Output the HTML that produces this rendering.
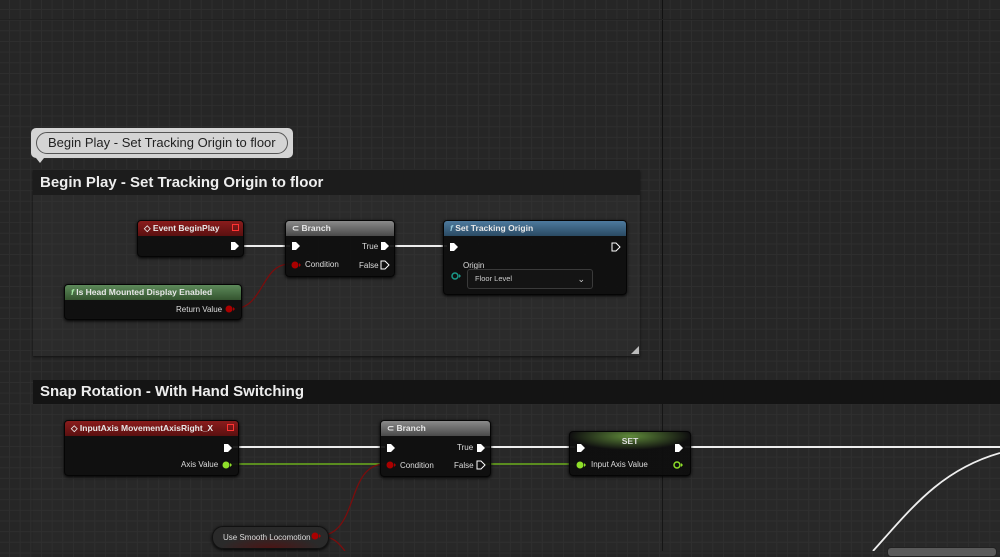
<!DOCTYPE html>
<html><head><style>
*{margin:0;padding:0;box-sizing:border-box}
body{width:1000px;height:551px;overflow:hidden;position:relative;font-family:"Liberation Sans",sans-serif;
background-color:#262626;
background-image:linear-gradient(#2e2e2e 1px,transparent 1px),linear-gradient(90deg,#2e2e2e 1px,transparent 1px);
background-size:10.67px 10.67px;background-position:9px 9px}
.abs{position:absolute}
.node{position:absolute;background:rgba(14,14,14,.92);border:1px solid #050505;border-radius:4px;box-shadow:0 1px 3px #000;color:#ddd;font-size:8.5px}
.hd{height:15px;border-radius:3px 3px 0 0;padding-left:6px;line-height:15px;font-size:8.5px;font-weight:bold;color:#e8e8e8}
.lbl{position:absolute;font-size:8px;color:#ddd}
</style></head><body>
<div class="abs" style="left:662px;top:0;width:1px;height:551px;background:#111"></div>
<div class="abs" style="left:0;top:19px;width:1000px;height:1px;background:#212121"></div>

<!-- comment bubble -->
<div class="abs" style="left:31px;top:128px;width:262px;height:30px;background:#d4d4d4;border-radius:5px"></div>
<div class="abs" style="left:36px;top:132px;width:252px;height:22px;border:1px solid #555;border-radius:11px;font-size:13px;color:#222;line-height:20px;padding-left:11px">Begin Play - Set Tracking Origin to floor</div>
<div class="abs" style="left:36px;top:158px;width:0;height:0;border-left:4px solid transparent;border-right:4px solid transparent;border-top:5px solid #d4d4d4"></div>

<!-- comment 1 -->
<div class="abs" style="left:33px;top:170px;width:607px;height:186px;background:rgba(60,60,60,.25);box-shadow:0 1px 2px #111"></div>
<div class="abs" style="left:33px;top:170px;width:607px;height:25px;background:#1c1c1c;color:#eee;font-weight:bold;font-size:15px;line-height:25px;padding-left:7px">Begin Play - Set Tracking Origin to floor</div>
<svg class="abs" style="left:630px;top:345px" width="10" height="10"><path d="M9 1L1 9H9Z" fill="#bbb"/></svg>

<!-- comment 2 -->
<div class="abs" style="left:33px;top:380px;width:967px;height:24px;background:#141414;color:#eee;font-weight:bold;font-size:15px;line-height:24px;padding-left:7px">Snap Rotation - With Hand Switching</div>
<div class="abs" style="left:33px;top:404px;width:967px;height:147px;background:rgba(60,60,60,.12)"></div>

<!-- wires -->
<svg class="abs" style="left:0;top:0" width="1000" height="551">
<g fill="none" stroke-width="2">
<path d="M243 246H290" stroke="#eee"/>
<path d="M390 246H447" stroke="#eee"/>
<path d="M232 309C265 309 260 264 290 264" stroke="#7a0d0d" stroke-width="1.3"/>
<path d="M233 447H385" stroke="#eee"/>
<path d="M226 464H385" stroke="#6aad1c" stroke-width="1.5"/>
<path d="M318 536C360 536 345 464 385 464" stroke="#7a0d0d" stroke-width="1.3"/>
<path d="M318 536C335 536 340 545 345 551" stroke="#7a0d0d" stroke-width="1.3"/>
<path d="M484 447H575" stroke="#eee"/>
<path d="M484 464H575" stroke="#6aad1c" stroke-width="1.5"/>
<path d="M685 447H1000" stroke="#eee"/>
<path d="M1000 453C940 470 910 510 873 551" stroke="#eee" stroke-width="1.8"/>
</g></svg>

<!-- Event BeginPlay -->
<div class="node" style="left:137px;top:220px;width:107px;height:37px">
<div class="hd" style="background:linear-gradient(#8a1c1c,#5a1010)">◇ Event BeginPlay</div>
<div class="abs" style="right:4px;top:3px;width:7px;height:7px;border:1.5px solid #f33"></div>
<svg class="abs" style="left:92px;top:20px" width="10" height="10"><path d="M1 1H5L9 5L5 9H1Z" fill="#fff"/></svg>
</div>

<!-- Branch 1 -->
<div class="node" style="left:285px;top:220px;width:110px;height:57px">
<div class="hd" style="background:linear-gradient(#8a8a8a,#4a4a4a)">⊂ Branch</div>
<svg class="abs" style="left:5px;top:20px" width="10" height="10"><path d="M1 1H5L9 5L5 9H1Z" fill="#fff"/></svg>
<span class="lbl" style="left:76px;top:21px">True</span>
<svg class="abs" style="left:94px;top:20px" width="10" height="10"><path d="M1 1H5L9 5L5 9H1Z" fill="#fff"/></svg>
<svg class="abs" style="left:5px;top:39px" width="12" height="10"><circle cx="4" cy="5" r="3.5" fill="#a00"/><path d="M8 3L10 5L8 7" fill="#a00"/></svg>
<span class="lbl" style="left:19px;top:39px">Condition</span>
<span class="lbl" style="left:73px;top:40px">False</span>
<svg class="abs" style="left:94px;top:39px" width="10" height="10"><path d="M1 1H5L9 5L5 9H1Z" fill="none" stroke="#fff"/></svg>
</div>

<!-- Set Tracking Origin -->
<div class="node" style="left:443px;top:220px;width:184px;height:75px">
<div class="hd" style="background:linear-gradient(#4d7a9e,#2a4a63)"><i style="color:#9cd">f</i> Set Tracking Origin</div>
<svg class="abs" style="left:5px;top:21px" width="10" height="10"><path d="M1 1H5L9 5L5 9H1Z" fill="#fff"/></svg>
<svg class="abs" style="left:167px;top:21px" width="10" height="10"><path d="M1 1H5L9 5L5 9H1Z" fill="none" stroke="#fff"/></svg>
<span class="lbl" style="left:19px;top:40px">Origin</span>
<svg class="abs" style="left:7px;top:50px" width="11" height="10"><circle cx="4" cy="5" r="3" fill="none" stroke="#1a9a8a" stroke-width="1.5"/><path d="M8 3L10 5L8 7" fill="#1a9a8a"/></svg>
<div class="abs" style="left:23px;top:48px;width:126px;height:20px;border:1px solid #3a3a3a;border-radius:3px;background:#141414;font-size:7.5px;color:#ccc;line-height:18px;padding-left:7px">Floor Level<span style="position:absolute;right:7px;top:0;font-size:9px">⌄</span></div>
</div>

<!-- Is HMD -->
<div class="node" style="left:64px;top:284px;width:178px;height:36px">
<div class="hd" style="background:linear-gradient(#5d8a5a,#34542f)"><i style="color:#aea">f</i> Is Head Mounted Display Enabled</div>
<span class="lbl" style="left:111px;top:20px">Return Value</span>
<svg class="abs" style="left:159px;top:19px" width="12" height="10"><circle cx="5" cy="5" r="3.5" fill="#a00"/><path d="M9 3L11 5L9 7" fill="#a00"/></svg>
</div>

<!-- InputAxis -->
<div class="node" style="left:64px;top:420px;width:175px;height:56px">
<div class="hd" style="background:linear-gradient(#8a1c1c,#5a1010)">◇ InputAxis MovementAxisRight_X</div>
<div class="abs" style="right:4px;top:3px;width:7px;height:7px;border:1.5px solid #f33"></div>
<svg class="abs" style="left:158px;top:22px" width="10" height="10"><path d="M1 1H5L9 5L5 9H1Z" fill="#fff"/></svg>
<span class="lbl" style="left:116px;top:39px">Axis Value</span>
<svg class="abs" style="left:156px;top:39px" width="12" height="10"><circle cx="5" cy="5" r="3.5" fill="#8fe02a"/><path d="M9 3L11 5L9 7" fill="#8fe02a"/></svg>
</div>

<!-- Branch 2 -->
<div class="node" style="left:380px;top:420px;width:111px;height:57px">
<div class="hd" style="background:linear-gradient(#8a8a8a,#4a4a4a)">⊂ Branch</div>
<svg class="abs" style="left:5px;top:22px" width="10" height="10"><path d="M1 1H5L9 5L5 9H1Z" fill="#fff"/></svg>
<span class="lbl" style="left:76px;top:22px">True</span>
<svg class="abs" style="left:95px;top:22px" width="10" height="10"><path d="M1 1H5L9 5L5 9H1Z" fill="#fff"/></svg>
<svg class="abs" style="left:5px;top:39px" width="12" height="10"><circle cx="4" cy="5" r="3.5" fill="#a00"/><path d="M8 3L10 5L8 7" fill="#a00"/></svg>
<span class="lbl" style="left:19px;top:40px">Condition</span>
<span class="lbl" style="left:73px;top:40px">False</span>
<svg class="abs" style="left:95px;top:39px" width="10" height="10"><path d="M1 1H5L9 5L5 9H1Z" fill="none" stroke="#fff"/></svg>
</div>

<!-- SET -->
<div class="node" style="left:569px;top:431px;width:122px;height:45px;background:radial-gradient(ellipse 60px 14px at 50% 4px,#5f8a3a,rgba(14,14,14,.95))">
<div class="abs" style="left:0;width:120px;top:4px;text-align:center;font-size:8.5px;font-weight:bold;color:#ddd">SET</div>
<svg class="abs" style="left:6px;top:11px" width="10" height="10"><path d="M1 1H5L9 5L5 9H1Z" fill="#fff"/></svg>
<svg class="abs" style="left:104px;top:11px" width="10" height="10"><path d="M1 1H5L9 5L5 9H1Z" fill="#fff"/></svg>
<svg class="abs" style="left:5px;top:28px" width="12" height="10"><circle cx="5" cy="5" r="3.5" fill="#8fe02a"/><path d="M9 3L11 5L9 7" fill="#8fe02a"/></svg>
<span class="lbl" style="left:21px;top:28px">Input Axis Value</span>
<svg class="abs" style="left:102px;top:28px" width="12" height="10"><circle cx="5" cy="5" r="3" fill="none" stroke="#8fe02a" stroke-width="1.5"/><path d="M9 3L11 5L9 7" fill="#8fe02a"/></svg>
</div>

<!-- Use Smooth Locomotion -->
<div class="abs" style="left:212px;top:526px;width:117px;height:23px;border-radius:11px;background:radial-gradient(ellipse 50px 12px at 50% 100%,#4a1515,#2a2a2a);border:1px solid #111;box-shadow:0 1px 3px #000;font-size:8px;color:#ddd;line-height:21px;padding-left:10px">Use Smooth Locomotion</div>
<svg class="abs" style="left:310px;top:531px" width="12" height="10"><circle cx="5" cy="5" r="3.5" fill="#a00"/><path d="M9 3L11 5L9 7" fill="#a00"/></svg>

<!-- bottom partial node -->
<div class="abs" style="left:887px;top:547px;width:110px;height:10px;border-radius:4px;background:#5a5a5a;border:1px solid #222"></div>
</body></html>
